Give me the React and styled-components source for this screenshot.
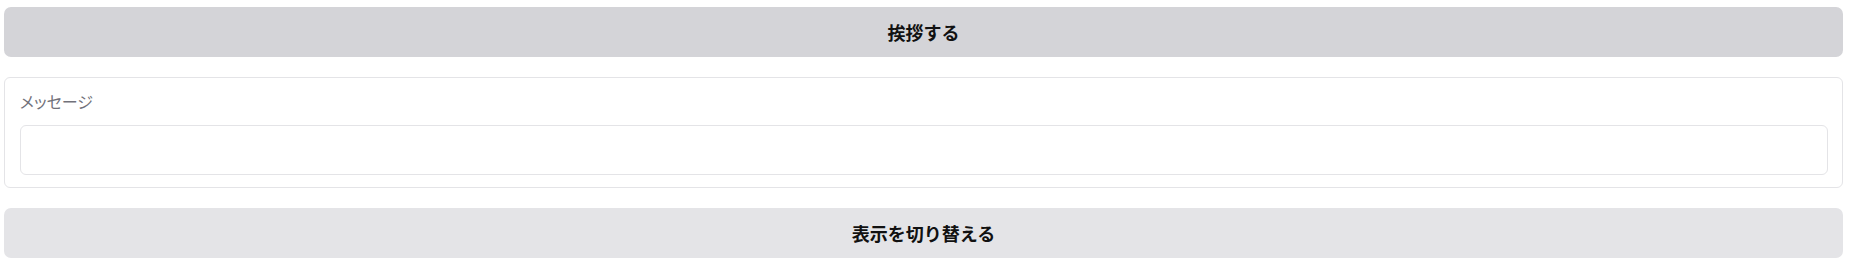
import React, { useState } from 'react';
import styled, { createGlobalStyle } from 'styled-components';

const GlobalStyle = createGlobalStyle`
  body {
    margin: 0;
    background: #ffffff;
    font-family: "Noto Sans CJK JP", "Noto Sans", sans-serif;
  }
`;

export default function App() {
  const [message, setMessage] = useState('');

  return (
    <>
      <GlobalStyle />
      <Page>
        <ActionButton type="button">挨拶する</ActionButton>
        <Panel>
          <Label htmlFor="message">メッセージ</Label>
          <TextInput
            id="message"
            value={message}
            onChange={e => setMessage(e.target.value)}
          />
        </Panel>
        <ActionButton type="button" $muted>表示を切り替える</ActionButton>
      </Page>
    </>
  );
}

const Page = styled.div`
  display: flex;
  flex-direction: column;
  gap: 20px;
  padding: 7px 6px 2px 4px;
`;

const ActionButton = styled.button`
  height: 50px;
  width: 100%;
  border: none;
  border-radius: 7px;
  background: ${p => (p.$muted ? '#e4e4e7' : '#d4d4d8')};
  color: #111111;
  font-family: "Noto Sans CJK JP", sans-serif;
  font-size: 18px;
  font-weight: 700;
  cursor: pointer;
`;

const Panel = styled.div`
  display: flex;
  flex-direction: column;
  gap: 12px;
  padding: 11px 14px 12px 15px;
  border: 1px solid #e4e4e7;
  border-radius: 6px;
`;

const Label = styled.label`
  font-size: 16px;
  line-height: 24px;
  color: #71717a;
  font-feature-settings: "palt";
`;

const TextInput = styled.input`
  height: 50px;
  box-sizing: border-box;
  border: 1px solid #e4e4e7;
  border-radius: 6px;
  padding: 0 12px;
  font-size: 16px;
  font-family: "Noto Sans CJK JP", sans-serif;
  outline: none;
`;
